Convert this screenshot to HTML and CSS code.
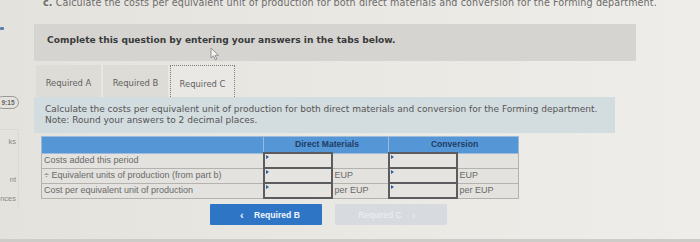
FILE: index.html
```html
<!DOCTYPE html>
<html lang="en">
<head>
    <meta charset="UTF-8">
    <meta name="viewport" content="width=device-width, initial-scale=1.0">
    <title>Required C</title>
    <link rel="stylesheet" href="styles.css">
</head>
<body>
    <div class="page">
        <aside class="sidebar">
            <span class="dot"></span>
            <span class="timer">9:15</span>
            <div class="side-links">
                <span class="side-item">ks</span>
                <span class="side-item">nt</span>
                <span class="side-item">nces</span>
            </div>
        </aside>

        <main class="main">
            <p class="question-title"><b>c.</b> Calculate the costs per equivalent unit of production for both direct materials and conversion for the Forming department.</p>

            <div class="banner">
                Complete this question by entering your answers in the tabs below.
                <svg class="cursor" width="10" height="14" viewBox="0 0 10 14">
                    <path d="M1 1 L1 11 L3.5 8.8 L5.3 12.8 L6.8 12.1 L5.1 8.3 L8.4 8.3 Z" fill="#f4f4f2" stroke="#8a8a8a" stroke-width="0.9"/>
                </svg>
            </div>

            <div class="tabs">
                <div class="tab">Required A</div>
                <div class="tab">Required B</div>
                <div class="tab active">Required C</div>
            </div>

            <div class="info">
                <p>Calculate the costs per equivalent unit of production for both direct materials and conversion for the Forming department.</p>
                <p>Note: Round your answers to 2 decimal places.</p>
            </div>

            <table class="cost-table">
                <colgroup>
                    <col class="c-label">
                    <col class="c-input">
                    <col class="c-unit">
                    <col class="c-input">
                    <col class="c-unit2">
                </colgroup>
                <tr class="head">
                    <th></th>
                    <th colspan="2">Direct Materials</th>
                    <th colspan="2">Conversion</th>
                </tr>
                <tr>
                    <td>Costs added this period</td>
                    <td class="input"><span class="mark"></span></td>
                    <td></td>
                    <td class="input"><span class="mark"></span></td>
                    <td></td>
                </tr>
                <tr>
                    <td>÷ Equivalent units of production (from part b)</td>
                    <td class="input"><span class="mark"></span></td>
                    <td>EUP</td>
                    <td class="input"><span class="mark"></span></td>
                    <td>EUP</td>
                </tr>
                <tr>
                    <td>Cost per equivalent unit of production</td>
                    <td class="input"><span class="mark"></span></td>
                    <td>per EUP</td>
                    <td class="input"><span class="mark"></span></td>
                    <td>per EUP</td>
                </tr>
            </table>

            <div class="nav">
                <button class="nav-btn prev"><span class="chev">&lsaquo;</span> Required B</button>
                <button class="nav-btn next" disabled>Required C <span class="chev">&rsaquo;</span></button>
            </div>
        </main>
    </div>
    <div class="bottom-band"></div>
</body>
</html>
```

FILE: styles.css
```css
html, body {
    margin: 0;
    padding: 0;
}
body {
    width: 700px;
    height: 242px;
    overflow: hidden;
    font-family: 'DejaVu Sans', Verdana, sans-serif;
    color: #444;
    background: linear-gradient(90deg, #e4e2dd 0%, #e9e7e2 40%, #eeede9 100%);
    display: flex;
    flex-direction: column;
}
.page {
    display: flex;
    flex: 1;
    min-height: 0;
}
.sidebar {
    width: 19px;
    flex-shrink: 0;
    display: flex;
    flex-direction: column;
}
.dot {
    display: block;
    width: 4px;
    height: 3px;
    margin-top: 27px;
    background-color: #5b7fa8;
    border-radius: 1px;
}
.timer {
    display: block;
    margin-top: 66px;
    margin-left: -4px;
    width: 20px;
    height: 11px;
    padding-left: 1px;
    border: 1px solid #9a9893;
    border-radius: 7px;
    font-family: 'Liberation Sans', Arial, sans-serif;
    font-size: 6.5px;
    font-weight: bold;
    line-height: 11px;
    text-align: center;
    color: #666;
}
.side-links {
    display: flex;
    flex-direction: column;
    margin-top: 20px;
    border-right: 1px solid #dbd9d4;
    border-top: 1px solid #dbd9d4;
    height: 78px;
}
.side-item {
    font-family: 'Liberation Sans', Arial, sans-serif;
    font-size: 7.5px;
    color: #8a8884;
    text-align: right;
    padding-right: 2px;
    line-height: 8px;
    height: 8px;
}
.side-item:nth-child(1) { margin-top: 8px; }
.side-item:nth-child(2) { margin-top: 30px; }
.side-item:nth-child(3) { margin-top: 11px; }
.main {
    margin-left: 15px;
    flex: 1;
}
.question-title {
    margin: -3px 0 0 9px;
    font-size: 9.6px;
    line-height: 12px;
    color: #6c6c6c;
    white-space: nowrap;
    letter-spacing: 0.1px;
}
.banner {
    position: relative;
    margin-top: 15px;
    width: 589px;
    height: 37px;
    padding-left: 13px;
    background-color: #d5d4d0;
    font-weight: bold;
    font-size: 9.1px;
    line-height: 33px;
    color: #3a3a3a;
}
.cursor {
    position: absolute;
    left: 176px;
    top: 23px;
}
.tabs {
    display: flex;
    margin-top: 4px;
    margin-left: 2px;
    height: 32px;
}
.tab {
    width: 67px;
    height: 32px;
    box-sizing: border-box;
    background-color: #dddcd7;
    border-right: 2px solid #e8e7e2;
    font-size: 8.4px;
    line-height: 36px;
    text-align: center;
    color: #5f5f5f;
}
.tab.active {
    width: 65px;
    background-color: #e9e8e4;
    border: 1px dotted #7b7b7b;
    border-bottom: none;
}
.info {
    width: 570px;
    height: 36px;
    padding-left: 11px;
    background-color: #d3dcdf;
    font-size: 9px;
    line-height: 11px;
    color: #555;
}
.info p {
    margin: 0;
}
.info p:first-child {
    padding-top: 7px;
}
.cost-table {
    margin-top: 3px;
    margin-left: 7px;
    width: 477px;
    table-layout: fixed;
    border-collapse: collapse;
    font-family: 'Liberation Sans', Arial, sans-serif;
    font-size: 9px;
    color: #6a6a6a;
}
.c-label { width: 222px; }
.c-input { width: 68px; }
.c-unit { width: 57px; }
.c-unit2 { width: 62px; }
.cost-table td, .cost-table th {
    border: 1px solid #b3b2ae;
    height: 11px;
    line-height: 11px;
    padding: 1px 0 1px 2px;
    text-align: left;
    white-space: nowrap;
    background-color: #e3e2de;
}
.cost-table .head th {
    background-color: #5596d6;
    border-color: #9dbbd9;
    height: 13px;
    text-align: center;
    color: #1f3d66;
    font-size: 8.6px;
    font-weight: bold;
}
.cost-table td.input {
    position: relative;
    border: 2px solid #5c5c5e;
    background-color: #e5e4e1;
}
.mark {
    position: absolute;
    left: 1px;
    top: 1px;
    width: 0;
    height: 0;
    border-top: 2px solid transparent;
    border-bottom: 2px solid transparent;
    border-left: 3px solid #2f5f9a;
}
.nav {
    display: flex;
    gap: 13px;
    margin-top: 5px;
    margin-left: 176px;
}
.nav-btn {
    width: 112px;
    height: 21px;
    border: none;
    border-radius: 1px;
    font-family: 'Liberation Sans', Arial, sans-serif;
    font-size: 8.6px;
    font-weight: bold;
    padding: 0;
}
.prev {
    background-color: #2f75c6;
    color: #f2f5fa;
}
.next {
    background-color: #d7dbe0;
    color: #eef0f3;
    font-weight: normal;
}
.chev {
    font-size: 11px;
    margin: 0 8px;
    vertical-align: -1px;
}
.bottom-band {
    height: 3px;
    background-color: #cdccc8;
}
```
